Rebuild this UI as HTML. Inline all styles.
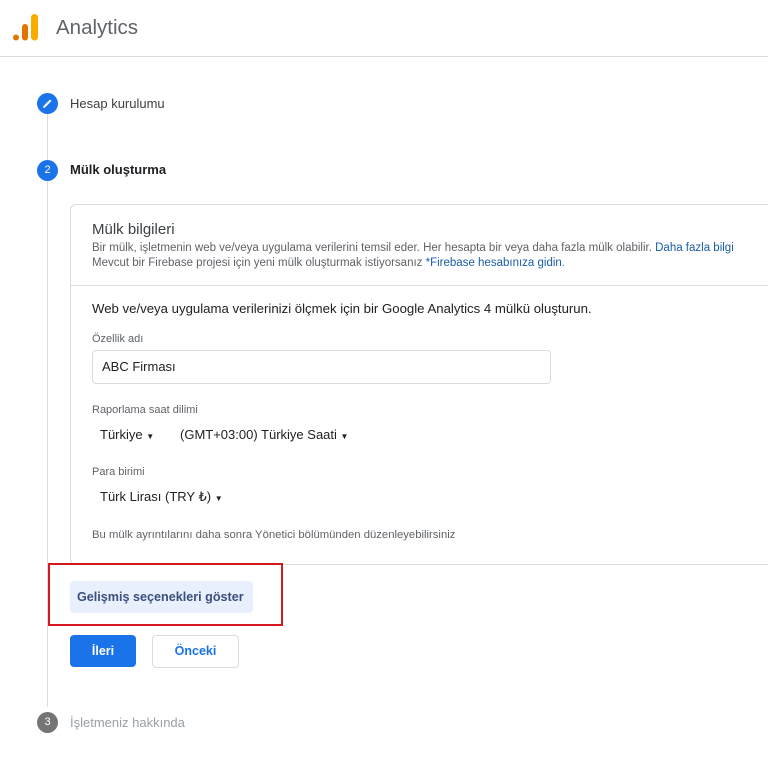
<!DOCTYPE html>
<html><head><meta charset="utf-8"><style>
body{margin:0;width:768px;height:762px;background:#fff;font-family:"Liberation Sans",Arial,sans-serif;position:relative;overflow:hidden;color:#3c4043}
.a{position:absolute}
.t{white-space:nowrap}
</style></head><body>
<div class="a" style="left:0;top:56px;width:768px;height:1px;background:#dadce0"></div>
<svg class="a" style="left:12px;top:13px" width="28" height="28" viewBox="0 0 28 28">
<circle cx="4" cy="24.5" r="3" fill="#e37400"/>
<rect x="10" y="11" width="6" height="16.5" rx="3" fill="#e37400"/>
<rect x="19" y="1" width="7" height="26.5" rx="3.5" fill="#f9ab00"/>
</svg>
<div class="a t" style="left:56px;top:16px;font-size:20.5px;color:#5f6368">Analytics</div>

<div class="a" style="left:47px;top:114px;width:1px;height:46px;background:#dadce0"></div>
<div class="a" style="left:47px;top:181px;width:1px;height:526px;background:#dadce0"></div>

<div class="a" style="left:37px;top:93px;width:21px;height:21px;border-radius:50%;background:#1a73e8"></div>
<svg class="a" style="left:41px;top:97px" width="13" height="13" viewBox="0 0 13 13"><path d="M2 11 L2.5 9 L9 2.5 L10.5 4 L4 10.5 Z" fill="#fff"/></svg>
<div class="a t" style="left:70px;top:96px;font-size:13px;color:#3c4043">Hesap kurulumu</div>

<div class="a" style="left:37px;top:160px;width:21px;height:21px;border-radius:50%;background:#1a73e8;color:#fff;font-size:11px;text-align:center;line-height:21px">2</div>
<div class="a t" style="left:70px;top:162px;font-size:13px;font-weight:bold;color:#202124">Mülk oluşturma</div>

<div class="a" style="left:70px;top:204px;width:710px;height:361px;border:1px solid #dadce0;border-radius:6px;box-sizing:border-box"></div>
<div class="a" style="left:71px;top:285px;width:700px;height:1px;background:#dadce0"></div>
<div class="a t" style="left:92px;top:221px;font-size:15px;color:#3c4043">Mülk bilgileri</div>
<div class="a t" style="left:92px;top:242px;font-size:11.5px;color:#5f6368">Bir mülk, işletmenin web ve/veya uygulama verilerini temsil eder. Her hesapta bir veya daha fazla mülk olabilir. <span style="color:#1a5ca8">Daha fazla bilgi</span></div>
<div class="a t" style="left:92px;top:257px;font-size:11.5px;color:#5f6368">Mevcut bir Firebase projesi için yeni mülk oluşturmak istiyorsanız <span style="color:#1a5ca8">*Firebase hesabınıza gidin</span>.</div>

<div class="a t" style="left:92px;top:301px;font-size:13.2px;color:#202124">Web ve/veya uygulama verilerinizi ölçmek için bir Google Analytics 4 mülkü oluşturun.</div>
<div class="a t" style="left:92px;top:333px;font-size:11px;color:#5f6368">Özellik adı</div>
<div class="a" style="left:92px;top:350px;width:459px;height:34px;border:1px solid #dadce0;border-radius:4px;box-sizing:border-box"></div>
<div class="a t" style="left:102px;top:359px;font-size:13px;color:#202124">ABC Firması</div>
<div class="a t" style="left:92px;top:404px;font-size:11px;color:#5f6368">Raporlama saat dilimi</div>
<div class="a t" style="left:100px;top:427px;font-size:13px;color:#202124">Türkiye <span style="font-size:8px">▼</span></div>
<div class="a t" style="left:180px;top:427px;font-size:13px;color:#202124">(GMT+03:00) Türkiye Saati <span style="font-size:8px">▼</span></div>
<div class="a t" style="left:92px;top:466px;font-size:11px;color:#5f6368">Para birimi</div>
<div class="a t" style="left:100px;top:489px;font-size:13px;color:#202124">Türk Lirası (TRY ₺) <span style="font-size:8px">▼</span></div>
<div class="a t" style="left:92px;top:529px;font-size:11.3px;color:#5f6368">Bu mülk ayrıntılarını daha sonra Yönetici bölümünden düzenleyebilirsiniz</div>

<div class="a" style="left:70px;top:581px;width:183px;height:32px;background:#e8f0fe;border-radius:4px"></div>
<div class="a t" style="left:77px;top:590px;font-size:12.6px;font-weight:bold;color:#3b4f7c">Gelişmiş seçenekleri göster</div>
<div class="a" style="left:48px;top:563px;width:235px;height:63px;border:2px solid #d3191b;box-sizing:border-box"></div>

<div class="a" style="left:70px;top:635px;width:66px;height:32px;background:#1a73e8;border-radius:4px;color:#fff;font-size:12.5px;font-weight:bold;text-align:center;line-height:32px">İleri</div>
<div class="a" style="left:152px;top:635px;width:87px;height:33px;border:1px solid #dadce0;border-radius:4px;box-sizing:border-box;color:#1a73e8;font-size:12.5px;font-weight:bold;text-align:center;line-height:30px">Önceki</div>

<div class="a" style="left:37px;top:712px;width:21px;height:21px;border-radius:50%;background:#757575;color:#fff;font-size:11px;text-align:center;line-height:21px">3</div>
<div class="a t" style="left:70px;top:715px;font-size:13px;color:#9aa0a6">İşletmeniz hakkında</div>
</body></html>
